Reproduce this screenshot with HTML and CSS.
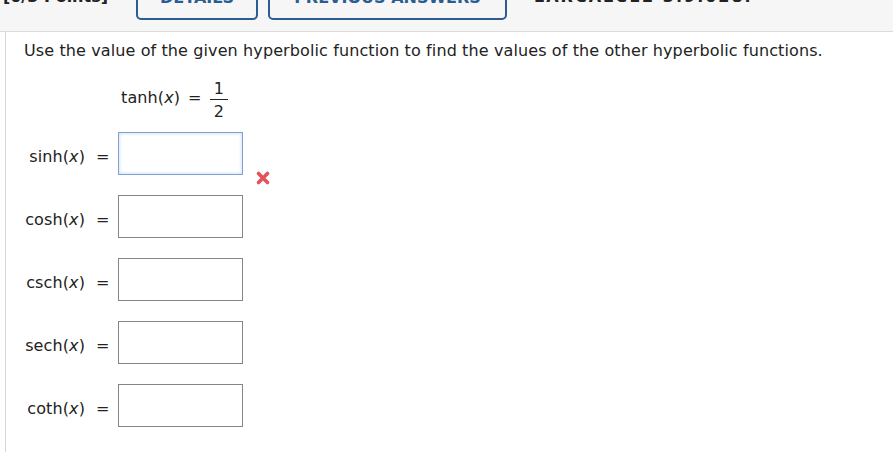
FILE: index.html
```html
<!DOCTYPE html>
<html lang="en">
<head>
<meta charset="utf-8">
<title>Hyperbolic functions</title>
<link rel="stylesheet" href="styles.css">
</head>
<body>
<header class="topbar">
  <div class="topbar-row">
    <span class="points">[0/3 Points]</span>
    <button class="tbtn tbtn-details">DETAILS</button>
    <button class="tbtn tbtn-prev">PREVIOUS ANSWERS</button>
    <span class="qid">LARCALC12 3.9.028.</span>
  </div>
</header>
<main class="question">
  <p class="prompt">Use the value of the given hyperbolic function to find the values of the other hyperbolic functions.</p>
  <div class="given">
    <span class="fn">tanh(<i>x</i>)</span>
    <span class="eq">=</span>
    <span class="frac"><span class="num">1</span><span class="den">2</span></span>
  </div>
  <div class="rows">
    <div class="row">
      <span class="lbl">sinh(<i>x</i>)</span>
      <span class="eq2">=</span>
      <input class="ans ans-focus" type="text" aria-label="sinh(x)">
      <svg class="wrong" width="16" height="16" viewBox="0 0 16 16" aria-hidden="true">
        <path d="M3.5 3.5 L12.5 12.5 M12.5 3.5 L3.5 12.5" stroke="#e4525b" stroke-width="3.6" stroke-linecap="round" fill="none"/>
      </svg>
    </div>
    <div class="row">
      <span class="lbl">cosh(<i>x</i>)</span>
      <span class="eq2">=</span>
      <input class="ans" type="text" aria-label="cosh(x)">
    </div>
    <div class="row">
      <span class="lbl">csch(<i>x</i>)</span>
      <span class="eq2">=</span>
      <input class="ans" type="text" aria-label="csch(x)">
    </div>
    <div class="row">
      <span class="lbl">sech(<i>x</i>)</span>
      <span class="eq2">=</span>
      <input class="ans" type="text" aria-label="sech(x)">
    </div>
    <div class="row">
      <span class="lbl">coth(<i>x</i>)</span>
      <span class="eq2">=</span>
      <input class="ans" type="text" aria-label="coth(x)">
    </div>
  </div>
</main>
</body>
</html>
```

FILE: styles.css
```css
* { box-sizing: border-box; }
html, body {
  margin: 0;
  padding: 0;
  background: #fff;
  height: 100%;
  overflow: hidden;
}
body {
  font-family: "DejaVu Sans", Verdana, sans-serif;
  color: #222;
  font-size: 16px;
  letter-spacing: 0.11px;
}
.topbar {
  height: 32px;
  background: #f6f6f6;
  border-bottom: 1px solid #dcdcdc;
  overflow: hidden;
}
.topbar-row {
  display: flex;
  align-items: flex-end;
  margin-top: -22px;
  height: 42px;
}
.points {
  width: 136px;
  padding-right: 28px;
  text-align: right;
  white-space: nowrap;
  font-weight: bold;
  font-size: 16px;
  line-height: 16px;
  letter-spacing: 0;
  margin-bottom: 15px;
  color: #222;
}
.tbtn {
  font-family: "DejaVu Sans", Verdana, sans-serif;
  font-weight: bold;
  font-size: 16px;
  line-height: 16px;
  letter-spacing: 0;
  color: #2b5d93;
  background: #f6f6f6;
  border: 2px solid #2b5d93;
  border-radius: 5px;
  height: 42px;
  padding: 0 0 3px;
  margin-bottom: 0;
  text-align: center;
  white-space: nowrap;
}
.tbtn-details { width: 122px; }
.tbtn-prev { width: 239px; margin-left: 10px; }
.qid {
  font-weight: bold;
  font-size: 16px;
  line-height: 16px;
  letter-spacing: 2px;
  margin-bottom: 15px;
  margin-left: 27px;
  white-space: nowrap;
  color: #222;
}
.question {
  margin-left: 5px;
  border-left: 1px solid #d6d6d6;
  height: calc(100% - 32px);
  padding: 10px 0 0 18px;
}
.prompt {
  margin: 0;
  line-height: 18px;
}
.given {
  display: flex;
  align-items: flex-start;
  margin-top: 21px;
  padding-left: 97px;
}
.fn {
  line-height: 18px;
  margin-top: 8px;
}
.eq {
  line-height: 18px;
  margin: 8px 8px 0 8px;
}
.frac {
  display: inline-flex;
  flex-direction: column;
  align-items: center;
  font-size: 16px;
  line-height: 16px;
}
.num {
  padding: 0 4px 2px;
  border-bottom: 1px solid #222;
}
.den { padding-top: 4px; }
.rows {
  display: flex;
  flex-direction: column;
  gap: 20px;
  margin-top: 12px;
}
.row {
  display: flex;
  align-items: center;
  height: 43px;
}
.lbl {
  width: 61px;
  text-align: right;
  padding-top: 6px;
  white-space: nowrap;
}
.eq2 {
  margin-left: 11px;
  width: 9px;
  padding-top: 6px;
}
.ans {
  margin: 0 0 0 13px;
  width: 125px;
  height: 43px;
  border: 1px solid #858585;
  background: #fff;
  padding: 0;
}
.ans-focus {
  border-color: #7fa4d3;
  box-shadow: inset 0 0 3px 1px #d5e3f4;
}
.wrong {
  align-self: flex-start;
  margin-top: 38px;
  margin-left: 12px;
}
```
